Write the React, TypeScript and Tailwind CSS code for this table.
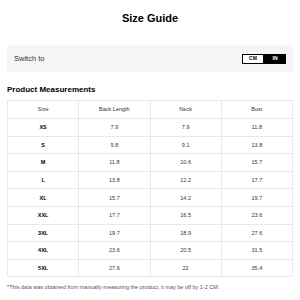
import React from "react";

const rows = [
  ["XS", "7.9", "7.9", "11.8"],
  ["S", "9.8", "9.1", "13.8"],
  ["M", "11.8", "10.6", "15.7"],
  ["L", "13.8", "12.2", "17.7"],
  ["XL", "15.7", "14.2", "19.7"],
  ["XXL", "17.7", "16.5", "23.6"],
  ["3XL", "19.7", "18.9", "27.6"],
  ["4XL", "23.6", "20.5", "31.5"],
  ["5XL", "27.6", "22", "35.4"],
];

const App = () => {
  return (
    <div className="w-[300px] h-[300px] bg-white px-[7px] font-['Liberation_Sans',Arial,sans-serif] text-[#222]">
      <h1 className="pt-[12px] text-center text-[11px] font-bold text-black leading-[13px]">
        Size Guide
      </h1>

      <div className="mt-[20px] h-[27px] bg-[#f5f5f5] flex items-center justify-between pl-[7px] pr-[7px]">
        <span className="text-[7.5px] text-[#333]">Switch to</span>
        <div className="flex h-[10px] text-[5px] font-bold">
          <div className="w-[22px] flex items-center justify-center border border-black bg-white text-black">CM</div>
          <div className="w-[22px] flex items-center justify-center bg-black text-white">IN</div>
        </div>
      </div>

      <h2 className="mt-[12px] text-[8px] font-bold text-black leading-[11px]">Product Measurements</h2>

      <table className="mt-[5px] w-full border-collapse text-[5.5px] text-[#333] table-fixed">
        <thead>
          <tr className="h-[18px]">
            <th className="border border-[#e8e8e8] font-normal">Size</th>
            <th className="border border-[#e8e8e8] font-normal">Back Length</th>
            <th className="border border-[#e8e8e8] font-normal">Neck</th>
            <th className="border border-[#e8e8e8] font-normal">Bust</th>
          </tr>
        </thead>
        <tbody>
          {rows.map((r) => (
            <tr key={r[0]} className="h-[17.6px]">
              <td className="border border-[#e8e8e8] text-center font-bold text-black">{r[0]}</td>
              <td className="border border-[#e8e8e8] text-center">{r[1]}</td>
              <td className="border border-[#e8e8e8] text-center">{r[2]}</td>
              <td className="border border-[#e8e8e8] text-center">{r[3]}</td>
            </tr>
          ))}
        </tbody>
      </table>

      <p className="mt-[6px] text-[5.5px] text-[#555]">
        *This data was obtained from manually measuring the product, it may be off by 1-2 CM.
      </p>
    </div>
  );
};

export default App;
